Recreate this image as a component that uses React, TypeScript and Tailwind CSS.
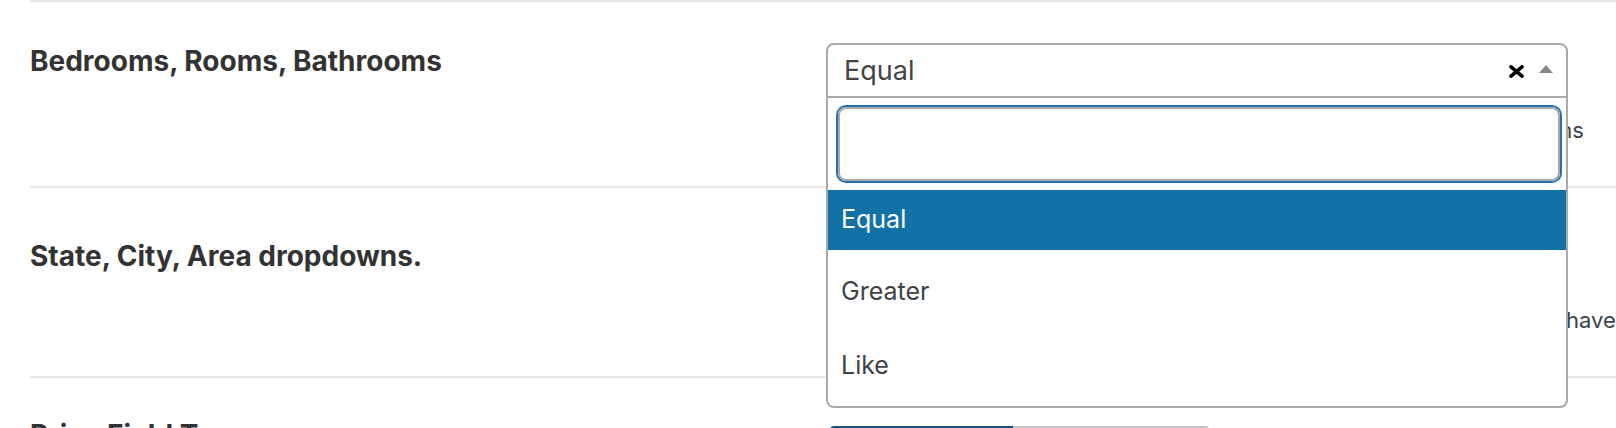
import React from "react";

export default function App() {
  return (
    <div className="w-[1616px] h-[428px] overflow-hidden bg-white pl-[30px] font-['Inter','Liberation_Sans',sans-serif]">
      {/* Row 1 */}
      <div className="flex h-[186px] border-t-2 border-[#e6e6e6]">
        <div className="w-[796px] shrink-0 pt-[41px] text-[28px] font-bold leading-[36px] text-[#333]">
          Bedrooms, Rooms, Bathrooms
        </div>
        <div className="flex-1 min-w-0 pt-[41px]">
          <div className="relative w-[742px]">
            <div className="flex h-[55px] items-center rounded-t-[8px] border-2 border-[#aaa] bg-white pl-[16px] pr-[13px]">
              <span className="flex-1 text-[27px] leading-none text-[#444]">Equal</span>
              <svg width="15" height="13" viewBox="0 0 15 13" className="mt-[1px]">
                <path d="M2 1.8 L13 11.2 M13 1.8 L2 11.2" stroke="#000" strokeWidth="3.6" strokeLinecap="round" />
              </svg>
              <svg width="14" height="8" viewBox="0 0 14 8" className="ml-[15px] -mt-[4px]">
                <path d="M0 8 L7 0 L14 8 Z" fill="#888" />
              </svg>
            </div>
            <div className="absolute left-0 right-0 top-full z-10 flex h-[310px] flex-col rounded-b-[8px] border-2 border-t-0 border-[#aaa] bg-white">
              <div className="mt-[9px] mb-[9px] ml-[10px] mr-[6px] h-[74px] rounded-[8px] border-2 border-[#a7a7a7] shadow-[0_0_0_2px_#2271b1]" />
              <div className="flex h-[60px] items-center bg-[#1272a6] pl-[13px] text-[25px] text-white">Equal</div>
              <div className="flex h-[84px] items-center pl-[13px] text-[25px] text-[#3c434a]">Greater</div>
              <div className="flex h-[64px] items-center pl-[13px] text-[25px] text-[#3c434a]">Like</div>
            </div>
          </div>
          <div className="mt-[17px] whitespace-nowrap pr-[32px] text-right text-[22px] leading-[30px] text-[#3c434a]">
            Compare type for bedrooms, rooms and bathrooms
          </div>
        </div>
      </div>

      {/* Row 2 */}
      <div className="flex h-[190px] border-t-2 border-[#e6e6e6]">
        <div className="w-[796px] shrink-0 pt-[50px] text-[28px] font-bold leading-[36px] text-[#333]">
          State, City, Area dropdowns.
        </div>
        <div className="flex-1 min-w-0 pt-[117px] pl-[740px] whitespace-nowrap text-[22px] leading-[30px] text-[#3c434a]">
          have added them in the settings.
        </div>
      </div>

      {/* Row 3 */}
      <div className="flex h-[200px] border-t-2 border-[#e6e6e6]">
        <div className="w-[796px] shrink-0 pt-[39px] text-[28px] font-bold leading-[36px] text-[#333]">
          Price Field Type
        </div>
        <div className="flex flex-1 min-w-0 pt-[48px] pl-[4px]">
          <div className="h-[30px] w-[183px] rounded-tl-[4px] bg-[#1d4f7c]" />
          <div className="h-[30px] w-[196px] rounded-tr-[4px] border-t-2 border-r-2 border-[#c3c4c7] bg-white" />
        </div>
      </div>
    </div>
  );
}
